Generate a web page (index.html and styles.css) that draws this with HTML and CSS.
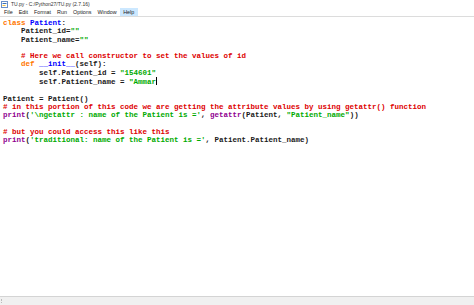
FILE: index.html
```html
<!DOCTYPE html>
<html>
<head>
<meta charset="utf-8">
<link rel="stylesheet" href="styles.css">
</head>
<body>
<div class="window">
  <div class="titlebar">
    <svg class="appicon" width="7" height="7" viewBox="0 0 7 7">
      <rect x="0.5" y="0.5" width="6" height="6" fill="#fff" stroke="#6a8fc8"/>
      <rect x="1.5" y="2" width="4" height="1" fill="#3b6fb6"/>
      <rect x="1.5" y="4" width="3" height="1" fill="#f0c040"/>
    </svg>
    <span class="title">TU.py - C:/Python27/TU.py (2.7.16)</span>
  </div>
  <div class="menubar">
    <span class="mi">File</span>
    <span class="mi">Edit</span>
    <span class="mi">Format</span>
    <span class="mi">Run</span>
    <span class="mi">Options</span>
    <span class="mi">Window</span>
    <span class="mi active">Help</span>
  </div>
  <div class="editor">
<pre class="code"><span class="kw">class</span> <span class="def">Patient</span>:
    Patient_id=<span class="str">""</span>
    Patient_name=<span class="str">""</span>

    <span class="cm"># Here we call constructor to set the values of id</span>
    <span class="kw">def</span> <span class="def">__init__</span>(self):
        self.Patient_id = <span class="str">"154601"</span>
        self.Patient_name = <span class="str">"Ammar</span><span class="caret"></span>

Patient = Patient()
<span class="cm"># in this portion of this code we are getting the attribute values by using getattr() function</span>
<span class="bi">print</span>(<span class="str">'\ngetattr : name of the Patient is ='</span>, <span class="bi">getattr</span>(Patient, <span class="str">"Patient_name"</span>))

<span class="cm"># but you could access this like this</span>
<span class="bi">print</span>(<span class="str">'traditional: name of the Patient is ='</span>, Patient.Patient_name)</pre>
  </div>
  <div class="statusbar"><span class="grip"></span></div>
</div>
</body>
</html>
```
FILE: styles.css
```css
html, body {
  margin: 0;
  padding: 0;
  background: #fff;
}
.window {
  width: 474px;
  height: 305px;
  display: flex;
  flex-direction: column;
  overflow: hidden;
}
.titlebar {
  height: 8px;
  display: flex;
  align-items: center;
  gap: 3px;
  padding-left: 1px;
  font-family: "Liberation Sans", Arial, sans-serif;
  font-size: 5px;
  color: #333;
}
.appicon { display: block; }
.title { white-space: nowrap; }
.menubar {
  height: 8px;
  display: flex;
  align-items: stretch;
  padding-left: 1px;
  font-family: "Liberation Sans", Arial, sans-serif;
  font-size: 5.4px;
  color: #222;
  border-bottom: 1px solid #dcdcdc;
}
.mi {
  display: flex;
  align-items: center;
  padding: 0 3px;
}
.active {
  background: #cce8ff;
  padding: 0 3.5px;
}
.editor {
  flex: 1;
  padding: 2px 0 0 3px;
}
.code {
  margin: 0;
  font-family: "Liberation Mono", "Courier New", monospace;
  font-size: 7.5px;
  line-height: 8.3px;
  font-weight: bold;
  color: #1a1a1a;
}
.kw { color: #ff7700; }
.def { color: #0000ff; }
.cm { color: #dd0000; }
.str { color: #00aa00; }
.bi { color: #900090; }
.caret {
  display: inline-block;
  width: 1px;
  height: 8px;
  background: #000;
  vertical-align: -1px;
}
.statusbar {
  height: 8px;
  background: #f0f0f0;
  border-top: 1px solid #d4d4d4;
  position: relative;
}
.grip {
  position: absolute;
  left: 1px;
  top: 2px;
  width: 3px;
  height: 4px;
  border-left: 1px dotted #bbb;
}
```
